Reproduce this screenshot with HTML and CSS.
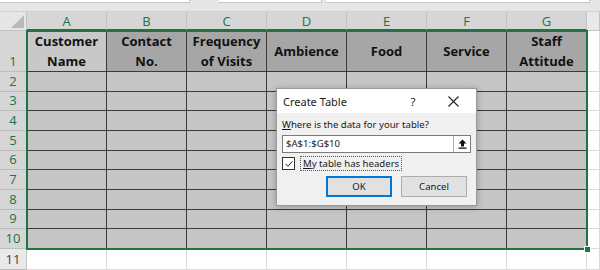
FILE: index.html
```html
<!DOCTYPE html>
<html>
<head>
<meta charset="utf-8">
<link rel="stylesheet" href="styles.css">
</head>
<body>
<div class="app">
  <div class="topbar">
    <div class="box box-name"></div>
    <div class="box box-mid"></div>
    <div class="box box-formula"></div>
  </div>
  <div class="sheet">
    <div class="corner"><span class="tri"></span></div>
    <div class="ch sel">A</div>
    <div class="ch sel">B</div>
    <div class="ch sel">C</div>
    <div class="ch sel">D</div>
    <div class="ch sel">E</div>
    <div class="ch sel">F</div>
    <div class="ch sel">G</div>
    <div class="ch"></div>

    <div class="rh sel">1</div>
    <div class="c hd active">Customer<br>Name</div>
    <div class="c hd">Contact<br>No.</div>
    <div class="c hd">Frequency<br>of Visits</div>
    <div class="c hd">Ambience</div>
    <div class="c hd">Food</div>
    <div class="c hd">Service</div>
    <div class="c hd">Staff<br>Attitude</div>
    <div class="c out"></div>

    <div class="rh sel">2</div><div class="c"></div><div class="c"></div><div class="c"></div><div class="c"></div><div class="c"></div><div class="c"></div><div class="c"></div><div class="c out"></div>
    <div class="rh sel">3</div><div class="c"></div><div class="c"></div><div class="c"></div><div class="c"></div><div class="c"></div><div class="c"></div><div class="c"></div><div class="c out"></div>
    <div class="rh sel">4</div><div class="c"></div><div class="c"></div><div class="c"></div><div class="c"></div><div class="c"></div><div class="c"></div><div class="c"></div><div class="c out"></div>
    <div class="rh sel">5</div><div class="c"></div><div class="c"></div><div class="c"></div><div class="c"></div><div class="c"></div><div class="c"></div><div class="c"></div><div class="c out"></div>
    <div class="rh sel">6</div><div class="c"></div><div class="c"></div><div class="c"></div><div class="c"></div><div class="c"></div><div class="c"></div><div class="c"></div><div class="c out"></div>
    <div class="rh sel">7</div><div class="c"></div><div class="c"></div><div class="c"></div><div class="c"></div><div class="c"></div><div class="c"></div><div class="c"></div><div class="c out"></div>
    <div class="rh sel">8</div><div class="c"></div><div class="c"></div><div class="c"></div><div class="c"></div><div class="c"></div><div class="c"></div><div class="c"></div><div class="c out"></div>
    <div class="rh sel">9</div><div class="c"></div><div class="c"></div><div class="c"></div><div class="c"></div><div class="c"></div><div class="c"></div><div class="c"></div><div class="c out"></div>
    <div class="rh sel">10</div><div class="c"></div><div class="c"></div><div class="c"></div><div class="c"></div><div class="c"></div><div class="c"></div><div class="c"></div><div class="c out"></div>
    <div class="rh">11</div><div class="c out"></div><div class="c out"></div><div class="c out"></div><div class="c out"></div><div class="c out"></div><div class="c out"></div><div class="c out"></div><div class="c out"></div>

    <div class="selection"><span class="handle"></span></div>
  </div>

  <div class="dialog">
    <div class="titlebar">
      <span class="title">Create Table</span>
      <span class="help">?</span>
      <span class="close">
        <svg width="11" height="11" viewBox="0 0 11 11"><path d="M0.5 0.5L10.5 10.5M10.5 0.5L0.5 10.5" stroke="#222" stroke-width="1.1" fill="none"/></svg>
      </span>
    </div>
    <div class="dbody">
      <div class="label"><u>W</u>here is the data for your table?</div>
      <div class="rangebox">
        <div class="rangeinput">$A$1:$G$10</div>
        <div class="rangebtn">
          <svg width="9" height="10" viewBox="0 0 9 10"><path d="M4.5 0.5L8.5 4.5H6V7.5H3V4.5H0.5Z" fill="#111"/><rect x="0.5" y="8.5" width="8" height="1.3" fill="#111"/></svg>
        </div>
      </div>
      <div class="checkrow">
        <span class="checkbox">
          <svg width="10" height="10" viewBox="0 0 10 10"><path d="M1.8 5L4 7.3L8.3 2.3" stroke="#222" stroke-width="1" fill="none"/></svg>
        </span>
        <span class="checklabel"><u>M</u>y table has headers</span>
      </div>
      <div class="buttons">
        <div class="btn ok">OK</div>
        <div class="btn">Cancel</div>
      </div>
    </div>
  </div>
</div>
</body>
</html>
```

FILE: styles.css
```css
html, body {
  margin: 0;
  padding: 0;
  width: 600px;
  height: 270px;
  overflow: hidden;
  background: #ffffff;
}

.app {
  position: relative;
  width: 600px;
  height: 270px;
  display: flex;
  flex-direction: column;
  font-family: "Open Sans", "Liberation Sans", sans-serif;
}

.topbar {
  height: 12px;
  flex: 0 0 12px;
  background: #e6e6e6;
  display: flex;
  align-items: flex-start;
  box-sizing: border-box;
  border-bottom: 1px solid #cfcfcf;
}

.box {
  height: 3px;
  background: #ffffff;
  border-bottom: 1px solid #c6c6c6;
  border-right: 1px solid #c6c6c6;
  box-sizing: border-box;
}
.box-name { width: 190px; }
.box-mid { width: 103px; margin-left: 29px; }
.box-formula { width: 264px; margin-left: 4px; }

.sheet {
  flex: 1;
  min-height: 0;
  display: grid;
  grid-template-columns: 27px repeat(7, 80px) 1fr;
  grid-template-rows: 19px 41px repeat(9, 19.67px) 1fr;
  position: relative;
}

.corner {
  background: #e6e6e6;
  border-right: 1px solid #c0c0c0;
  border-bottom: 1px solid #c0c0c0;
  box-sizing: border-box;
  position: relative;
}
.tri {
  position: absolute;
  right: 2px;
  bottom: 2px;
  width: 0;
  height: 0;
  border-left: 13px solid transparent;
  border-bottom: 13px solid #b9b9b9;
}

.ch {
  background: #e9e9e9;
  border-right: 1px solid #c3c3c3;
  border-bottom: 1px solid #c3c3c3;
  box-sizing: border-box;
  display: flex;
  align-items: center;
  justify-content: center;
  font-size: 13px;
  color: #444;
}
.ch.sel {
  background: #d6d6d6;
  color: #217346;
  border-bottom: 2px solid #217346;
}

.rh {
  background: #e9e9e9;
  border-right: 1px solid #c3c3c3;
  border-bottom: 1px solid #bdbdbd;
  box-sizing: border-box;
  display: flex;
  align-items: flex-end;
  justify-content: center;
  padding-bottom: 1px;
  font-size: 13px;
  line-height: 17px;
  color: #444;
}
.rh.sel {
  background: #d6d6d6;
  color: #217346;
}

.c {
  background: #c6c6c6;
  border-right: 1px solid #3a3a3a;
  border-bottom: 1px solid #3a3a3a;
  box-sizing: border-box;
}
.c.out {
  background: #ffffff;
  border-right: 1px solid #dadada;
  border-bottom: 1px solid #dadada;
}
.c.hd {
  background: #a6a6a6;
  display: flex;
  align-items: center;
  justify-content: center;
  text-align: center;
  font-weight: 700;
  font-size: 13px;
  line-height: 20px;
  color: #111;
}
.c.hd.active {
  background: #c8c8c8;
}

/* selection outline overlays the cells of A1:G10 */
.selection {
  position: absolute;
  grid-row: 2 / 12;
  grid-column: 2 / 9;
  top: -1px;
  left: -1px;
  right: -1px;
  bottom: -1px;
  border: 2px solid #217346;
  pointer-events: none;
}
.handle {
  position: absolute;
  right: -5px;
  bottom: -5px;
  width: 5px;
  height: 5px;
  background: #217346;
  border: 1px solid #ffffff;
}

/* dialog */
.dialog {
  position: absolute;
  left: 276px;
  top: 88px;
  width: 201px;
  height: 118px;
  box-sizing: border-box;
  border: 1px solid #9a9a9a;
  background: #f0f0f0;
  box-shadow: 0 1px 7px rgba(0, 0, 0, 0.28);
  display: flex;
  flex-direction: column;
  font-family: "Noto Sans", "Open Sans", sans-serif;
  color: #1a1a1a;
}

.titlebar {
  height: 24px;
  flex: 0 0 24px;
  background: #ffffff;
  display: flex;
  align-items: center;
  padding-left: 6px;
}
.title {
  font-size: 11px;
  flex: 1;
}
.help {
  font-size: 11.5px;
  width: 12px;
  text-align: center;
  margin-right: 29px;
}
.close {
  display: flex;
  margin-right: 17px;
}

.dbody {
  flex: 1;
  padding: 4px 5px 0 5px;
  display: flex;
  flex-direction: column;
}

.label {
  font-size: 9.6px;
  line-height: 16px;
  height: 16px;
}

.rangebox {
  margin-top: 2px;
  height: 18px;
  display: flex;
  box-sizing: border-box;
  border: 1px solid #7a7a7a;
  background: #ffffff;
}
.rangeinput {
  flex: 1;
  font-size: 9.6px;
  line-height: 16px;
  padding-left: 3px;
}
.rangebtn {
  width: 16px;
  border-left: 1px solid #adadad;
  background: #fdfdfd;
  display: flex;
  align-items: center;
  justify-content: center;
}

.checkrow {
  margin-top: 3px;
  height: 15px;
  display: flex;
  align-items: center;
}
.checkbox {
  width: 11px;
  height: 11px;
  border: 1px solid #333;
  background: #ffffff;
  display: flex;
  align-items: center;
  justify-content: center;
  box-sizing: content-box;
}
.checklabel {
  margin-left: 5px;
  font-size: 9.6px;
  line-height: 13px;
  padding: 0 2px;
  border: 1px dotted #555;
}

.buttons {
  margin-top: 5px;
  display: flex;
  justify-content: flex-end;
  gap: 9px;
  padding-right: 4px;
}
.btn {
  width: 66px;
  height: 21px;
  box-sizing: border-box;
  background: #e1e1e1;
  border: 1px solid #adadad;
  font-size: 9.6px;
  display: flex;
  align-items: center;
  justify-content: center;
}
.btn.ok {
  border: 2px solid #0078d7;
}
```
